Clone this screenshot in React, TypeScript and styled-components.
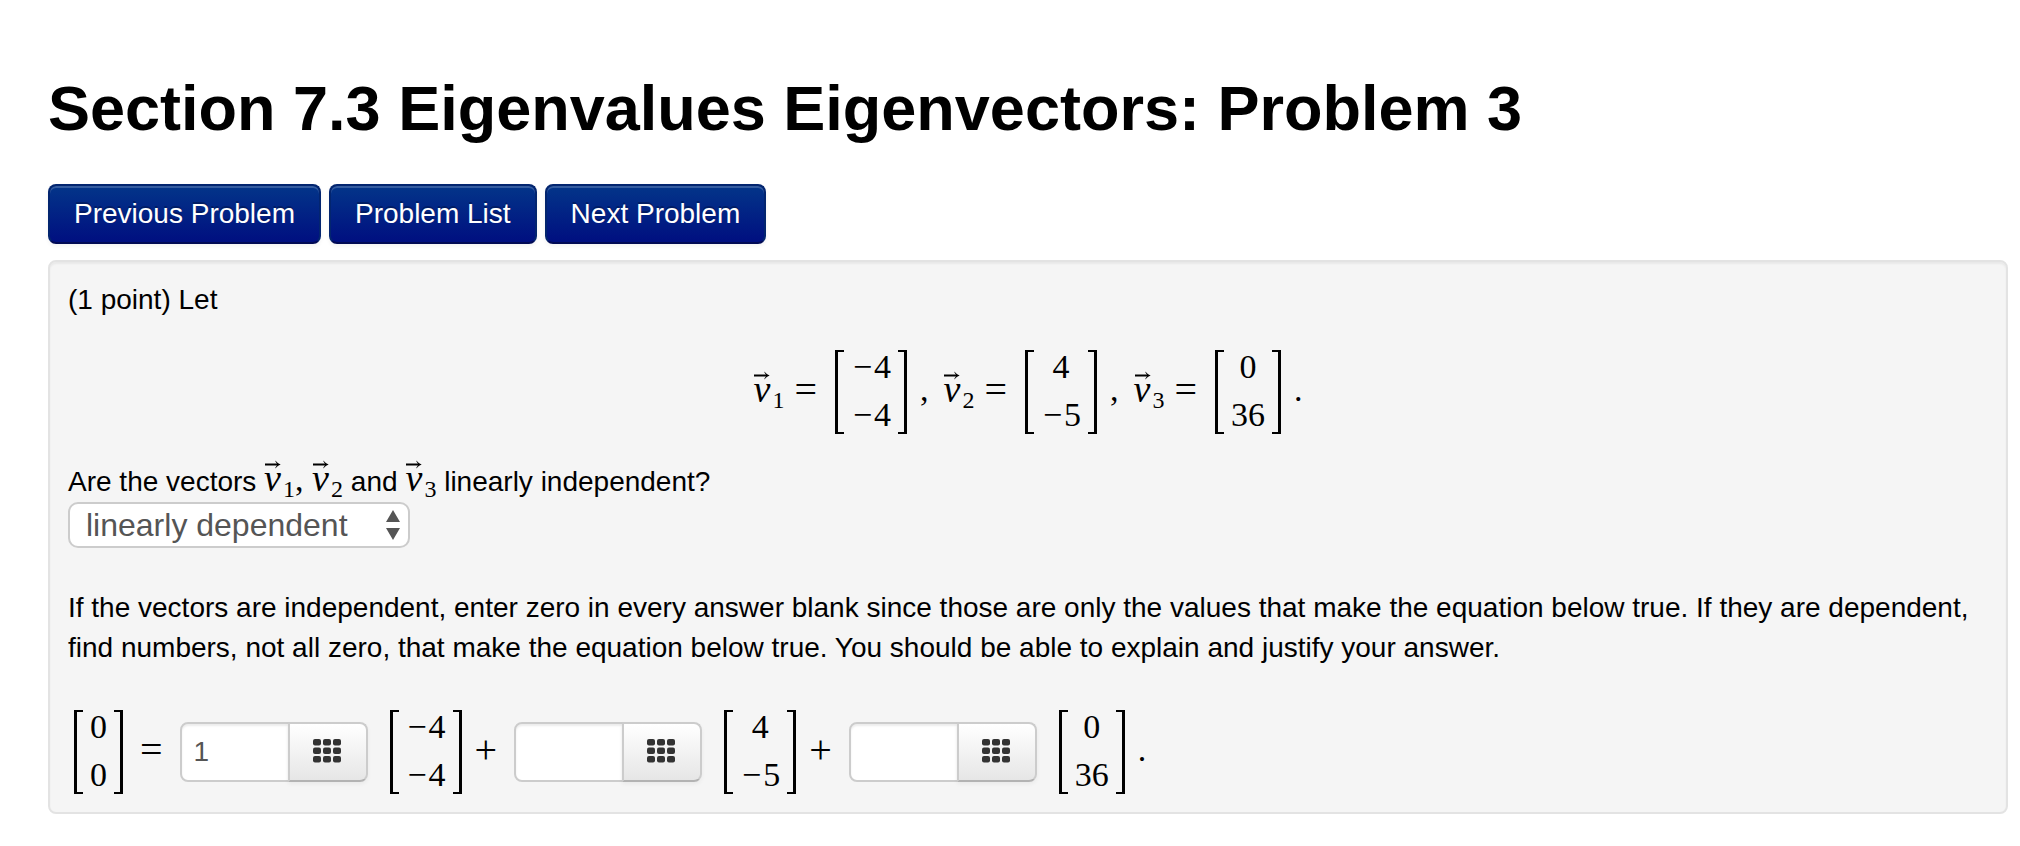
import React, { useState } from "react";
import styled, { createGlobalStyle } from "styled-components";

const GlobalStyle = createGlobalStyle`
  *, *::before, *::after { box-sizing: border-box; }
  body {
    margin: 0;
    background: #fff;
    color: #000;
    font-family: "Liberation Sans", Arial, sans-serif;
    font-size: 28px;
    line-height: 40px;
  }
`;

const Page = styled.main`
  padding: 68px 12px 32px 48px;
`;

const Title = styled.h1`
  margin: 0 0 36px;
  font-size: 63px;
  font-weight: 700;
  line-height: 80px;
`;

const ProblemNav = styled.nav`
  display: flex;
  flex-wrap: wrap;
  gap: 8px;
  margin-bottom: 16px;
`;

const NavButton = styled.a`
  padding: 8px 24px;
  border: 2px solid;
  border-color: #03256f #03256f #020b55;
  border-radius: 8px;
  background: linear-gradient(#033589, #000f80);
  box-shadow: inset 0 2px 0 rgba(255, 255, 255, 0.2), 0 2px 4px rgba(0, 0, 0, 0.05);
  color: #fff;
  text-decoration: none;
  text-shadow: 0 -2px 0 rgba(0, 0, 0, 0.25);
`;

const ProblemBody = styled.section`
  padding: 18px;
  border: 2px solid #e3e3e3;
  border-radius: 8px;
  background: #f5f5f5;
  box-shadow: inset 0 2px 2px rgba(0, 0, 0, 0.05);
`;

const Paragraph = styled.p`
  margin: 0;
`;

const MathText = styled.span`
  font-family: "Liberation Serif", "Times New Roman", serif;
  font-size: 34px;
  line-height: 32px;
`;

const DisplayEquation = styled.div`
  display: flex;
  justify-content: center;
  align-items: center;
  margin: 30px 0 28px;
`;

const Term = styled.div`
  display: flex;
  align-items: center;
`;

const Symbol = styled(MathText)<{ $before?: number; $after?: number }>`
  padding: 0 ${(p) => p.$after ?? 0}px 4px ${(p) => p.$before ?? 0}px;
`;

const Operator = styled(Symbol)`
  font-size: 40px;
`;

const VectorName = styled(MathText)`
  white-space: nowrap;
`;

const VectorLetter = styled.span`
  position: relative;
  display: inline-block;
  width: 18px;
  font-size: 38px;
  font-style: italic;
`;

const ArrowAccent = styled.svg`
  position: absolute;
  top: -2px;
  left: 1px;
`;

const Subscript = styled.sub`
  padding-left: 1px;
  font-size: 24px;
  line-height: 0;
  vertical-align: -6px;
`;

const MatrixBox = styled.span`
  display: inline-flex;
  align-items: center;
`;

const Bracket = styled.span<{ $side: "left" | "right" }>`
  width: 9px;
  height: 84px;
  border: solid #000;
  border-width: ${(p) => (p.$side === "left" ? "2px 0 2px 3px" : "2px 3px 2px 0")};
`;

const Entries = styled(MathText)`
  display: grid;
  gap: 16px;
  padding: 0 7px 3px;
  text-align: center;
`;

const Minus = styled.span`
  display: inline-block;
  width: 23px;
`;

const Question = styled.div`
  margin-bottom: 40px;
`;

const SelectWrap = styled.div`
  position: relative;
  width: 342px;
`;

const Select = styled.select`
  display: block;
  width: 100%;
  height: 46px;
  padding: 0 48px 0 16px;
  border: 2px solid #ccc;
  border-radius: 10px;
  background: #fff;
  color: #555;
  font: 32px/40px "Liberation Sans", Arial, sans-serif;
  appearance: none;
`;

const SelectArrows = styled.svg`
  position: absolute;
  top: 8px;
  right: 10px;
  pointer-events: none;
`;

const AnswerRow = styled.div`
  display: flex;
  flex-wrap: wrap;
  align-items: center;
  padding: 0 6px;
  margin-top: 42px;
`;

const AnswerGroup = styled.div`
  display: flex;
  margin: 0 22px 0 17px;
`;

const AnswerInput = styled.input`
  width: 110px;
  height: 60px;
  padding: 8px 12px;
  border: 2px solid #ccc;
  border-radius: 8px 0 0 8px;
  background: #fff;
  box-shadow: inset 0 2px 2px rgba(0, 0, 0, 0.075);
  color: #555;
  font: 28px/40px "Liberation Sans", Arial, sans-serif;
`;

const KeypadButton = styled.button`
  display: flex;
  align-items: center;
  justify-content: center;
  width: 80px;
  height: 60px;
  margin-left: -2px;
  padding: 0 2px 2px 0;
  border: 2px solid #ccc;
  border-bottom-color: #b3b3b3;
  border-radius: 0 8px 8px 0;
  background: linear-gradient(#fff, #e6e6e6);
  box-shadow: 0 2px 4px rgba(0, 0, 0, 0.05);
`;

function KeypadIcon() {
  return (
    <svg width="28" height="24" viewBox="0 0 28 24" fill="#333" aria-hidden="true">
      {[0, 8.5, 17].map((y) =>
        [0, 10, 20].map((x) => (
          <rect key={`${x}-${y}`} x={x} y={y} width="8" height="6.5" rx="2" />
        ))
      )}
    </svg>
  );
}

function Vector({ index }: { index: number }) {
  return (
    <VectorName>
      <VectorLetter>
        v
        <ArrowAccent width="16" height="9" viewBox="0 0 16 9" aria-hidden="true">
          <path d="M0 3.5H12C11 2.5 10.3 1.5 10.3 .5C12 2.5 13.5 3.7 15.7 4.5C13.5 5.3 12 6.5 10.3 8.5C10.3 7.5 11 6.5 12 5.5H0Z" />
        </ArrowAccent>
      </VectorLetter>
      <Subscript>{index}</Subscript>
    </VectorName>
  );
}

function Entry({ value }: { value: number }) {
  return (
    <span>
      {value < 0 && <Minus>−</Minus>}
      {Math.abs(value)}
    </span>
  );
}

function Matrix({ values }: { values: [number, number] }) {
  return (
    <MatrixBox>
      <Bracket $side="left" />
      <Entries>
        <Entry value={values[0]} />
        <Entry value={values[1]} />
      </Entries>
      <Bracket $side="right" />
    </MatrixBox>
  );
}

function Answer({ label, initial = "" }: { label: string; initial?: string }) {
  const [value, setValue] = useState(initial);
  return (
    <AnswerGroup>
      <AnswerInput aria-label={label} value={value} onChange={(e) => setValue(e.target.value)} />
      <KeypadButton type="button" aria-label="Equation editor">
        <KeypadIcon />
      </KeypadButton>
    </AnswerGroup>
  );
}

const vectors: [number, number][] = [
  [-4, -4],
  [4, -5],
  [0, 36],
];

export default function App() {
  return (
    <Page>
      <GlobalStyle />
      <Title>Section 7.3 Eigenvalues Eigenvectors: Problem 3</Title>
      <ProblemNav>
        <NavButton href="#previous">Previous Problem</NavButton>
        <NavButton href="#list">Problem List</NavButton>
        <NavButton href="#next">Next Problem</NavButton>
      </ProblemNav>
      <ProblemBody>
        <Paragraph>(1 point) Let</Paragraph>
        <DisplayEquation>
          {vectors.map((values, i) => (
            <Term key={i}>
              <Symbol>
                <Vector index={i + 1} />
              </Symbol>
              <Operator $before={10} $after={18}>=</Operator>
              <Matrix values={values} />
              <Symbol $before={13} $after={i < 2 ? 15 : 0}>{i < 2 ? "," : "."}</Symbol>
            </Term>
          ))}
        </DisplayEquation>
        <Question>
          <Paragraph as="label" htmlFor="independence">
            Are the vectors <Vector index={1} />
            <MathText>, </MathText>
            <Vector index={2} /> and <Vector index={3} /> linearly independent?
          </Paragraph>
          <SelectWrap>
            <Select id="independence" defaultValue="dependent">
              <option value="dependent">linearly dependent</option>
              <option value="independent">linearly independent</option>
            </Select>
            <SelectArrows width="14" height="30" viewBox="0 0 14 30" fill="#555" aria-hidden="true">
              <path d="M7 0L14 12H0ZM0 18H14L7 30Z" />
            </SelectArrows>
          </SelectWrap>
        </Question>
        <Paragraph>
          If the vectors are independent, enter zero in every answer blank since those are only the
          values that make the equation below true. If they are dependent, find numbers, not all
          zero, that make the equation below true. You should be able to explain and justify your
          answer.
        </Paragraph>
        <AnswerRow>
          <Matrix values={[0, 0]} />
          <Operator $before={17}>=</Operator>
          <Answer label="Coefficient of the first vector" initial="1" />
          <Matrix values={vectors[0]} />
          <Operator $before={13}>+</Operator>
          <Answer label="Coefficient of the second vector" />
          <Matrix values={vectors[1]} />
          <Operator $before={13}>+</Operator>
          <Answer label="Coefficient of the third vector" />
          <Matrix values={vectors[2]} />
          <Symbol $before={13}>.</Symbol>
        </AnswerRow>
      </ProblemBody>
    </Page>
  );
}
